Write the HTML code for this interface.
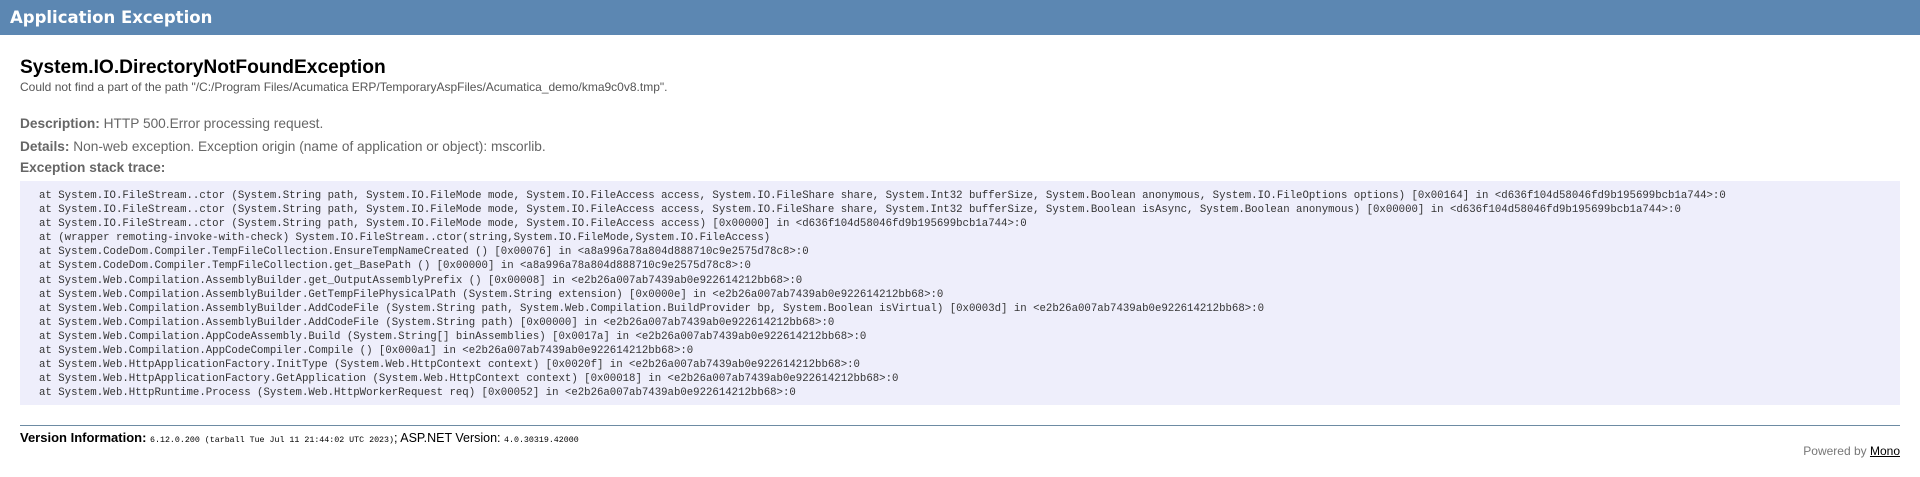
<!DOCTYPE html>
<html><head><meta charset="utf-8"><style>
html,body{margin:0;padding:0;background:#fff;width:1920px;height:477px;overflow:hidden}
.hdr{position:absolute;left:0;top:0;width:1920px;height:35px;background:#5c87b2}
.hdr span{position:absolute;left:10px;top:8px;font:bold 16.5px "DejaVu Sans",sans-serif;color:#fff;white-space:nowrap;line-height:20px}
.a{position:absolute;white-space:nowrap}
h2{position:absolute;left:20px;top:57px;margin:0;font:bold 19.2px "Liberation Sans",Arial,sans-serif;color:#000;line-height:22px}
.sub{left:20px;top:80px;font:12px "Liberation Sans",Arial,sans-serif;color:#555;line-height:14px}
.d{left:20px;font:13.7px "Liberation Sans",Arial,sans-serif;color:#666;line-height:16px}
.d b{color:#666}
.box{position:absolute;left:20px;top:181px;width:1880px;height:224px;background:#eeeefb}
pre{position:absolute;left:39px;top:189px;margin:0;font:10.7px/14.1px "Liberation Mono","DejaVu Sans Mono",monospace;color:#333}
.hr{position:absolute;left:20px;top:425px;width:1880px;height:1px;background:#6d8ba3}
.ver{left:20px;top:431px;font:bold 13px "Liberation Sans",Arial,sans-serif;color:#000;line-height:14px}
.ver tt{font:normal 8.3px "Liberation Mono",monospace}
.ver span{font-weight:normal;font-size:12.5px}
.pw{right:20px;top:444px;font:12px "Liberation Sans",Arial,sans-serif;color:#777;line-height:15px}
.pw u{color:#000}
</style></head><body>
<div class="hdr"><span>Application Exception</span></div>
<h2>System.IO.DirectoryNotFoundException</h2>
<div class="a sub">Could not find a part of the path "/C:/Program Files/Acumatica ERP/TemporaryAspFiles/Acumatica_demo/kma9c0v8.tmp".</div>
<div class="a d" style="top:116px"><b>Description:</b> HTTP 500.Error processing request.</div>
<div class="a d" style="top:139px"><b>Details:</b> Non-web exception. Exception origin (name of application or object): mscorlib.</div>
<div class="a d" style="top:160px"><b>Exception stack trace:</b></div>
<div class="box"></div>
<pre>at System.IO.FileStream..ctor (System.String path, System.IO.FileMode mode, System.IO.FileAccess access, System.IO.FileShare share, System.Int32 bufferSize, System.Boolean anonymous, System.IO.FileOptions options) [0x00164] in &lt;d636f104d58046fd9b195699bcb1a744&gt;:0
at System.IO.FileStream..ctor (System.String path, System.IO.FileMode mode, System.IO.FileAccess access, System.IO.FileShare share, System.Int32 bufferSize, System.Boolean isAsync, System.Boolean anonymous) [0x00000] in &lt;d636f104d58046fd9b195699bcb1a744&gt;:0
at System.IO.FileStream..ctor (System.String path, System.IO.FileMode mode, System.IO.FileAccess access) [0x00000] in &lt;d636f104d58046fd9b195699bcb1a744&gt;:0
at (wrapper remoting-invoke-with-check) System.IO.FileStream..ctor(string,System.IO.FileMode,System.IO.FileAccess)
at System.CodeDom.Compiler.TempFileCollection.EnsureTempNameCreated () [0x00076] in &lt;a8a996a78a804d888710c9e2575d78c8&gt;:0
at System.CodeDom.Compiler.TempFileCollection.get_BasePath () [0x00000] in &lt;a8a996a78a804d888710c9e2575d78c8&gt;:0
at System.Web.Compilation.AssemblyBuilder.get_OutputAssemblyPrefix () [0x00008] in &lt;e2b26a007ab7439ab0e922614212bb68&gt;:0
at System.Web.Compilation.AssemblyBuilder.GetTempFilePhysicalPath (System.String extension) [0x0000e] in &lt;e2b26a007ab7439ab0e922614212bb68&gt;:0
at System.Web.Compilation.AssemblyBuilder.AddCodeFile (System.String path, System.Web.Compilation.BuildProvider bp, System.Boolean isVirtual) [0x0003d] in &lt;e2b26a007ab7439ab0e922614212bb68&gt;:0
at System.Web.Compilation.AssemblyBuilder.AddCodeFile (System.String path) [0x00000] in &lt;e2b26a007ab7439ab0e922614212bb68&gt;:0
at System.Web.Compilation.AppCodeAssembly.Build (System.String[] binAssemblies) [0x0017a] in &lt;e2b26a007ab7439ab0e922614212bb68&gt;:0
at System.Web.Compilation.AppCodeCompiler.Compile () [0x000a1] in &lt;e2b26a007ab7439ab0e922614212bb68&gt;:0
at System.Web.HttpApplicationFactory.InitType (System.Web.HttpContext context) [0x0020f] in &lt;e2b26a007ab7439ab0e922614212bb68&gt;:0
at System.Web.HttpApplicationFactory.GetApplication (System.Web.HttpContext context) [0x00018] in &lt;e2b26a007ab7439ab0e922614212bb68&gt;:0
at System.Web.HttpRuntime.Process (System.Web.HttpWorkerRequest req) [0x00052] in &lt;e2b26a007ab7439ab0e922614212bb68&gt;:0</pre>
<div class="hr"></div>
<div class="a ver">Version Information: <tt>6.12.0.200 (tarball Tue Jul 11 21:44:02 UTC 2023)</tt><span>; ASP.NET Version: </span><tt>4.0.30319.42000</tt></div>
<div class="a pw">Powered by <u>Mono</u></div>
</body></html>
